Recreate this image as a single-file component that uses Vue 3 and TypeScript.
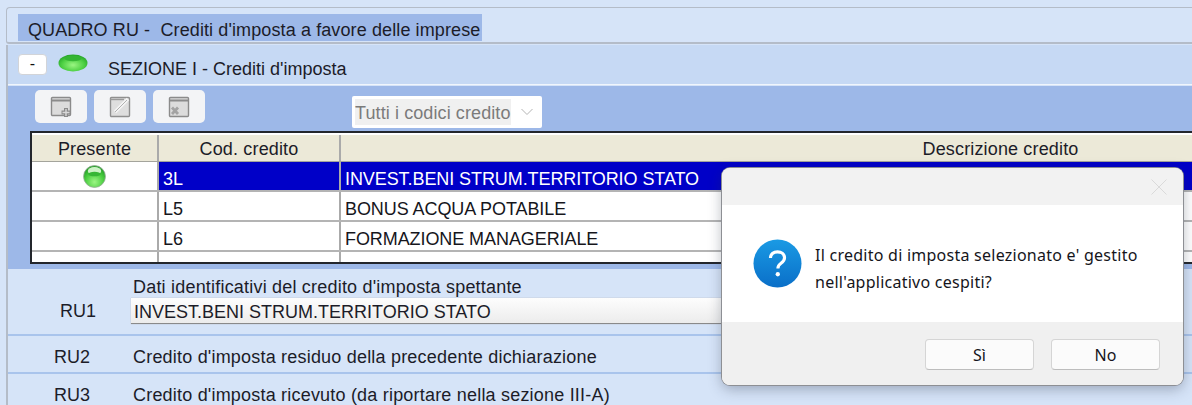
<script setup lang="ts">
interface CreditRow {
  code: string
  description: string
  present?: boolean
  selected?: boolean
}

const rows: CreditRow[] = [
  { code: '3L', description: 'INVEST.BENI STRUM.TERRITORIO STATO', present: true, selected: true },
  { code: 'L5', description: 'BONUS ACQUA POTABILE' },
  { code: 'L6', description: 'FORMAZIONE MANAGERIALE' },
  { code: '', description: '' }
]
</script>

<template>
  <div class="page">
    <div class="frame">
      <div class="quadro">
        <span class="quadro-title">QUADRO RU -&nbsp; Crediti d'imposta a favore delle imprese</span>
      </div>

      <div class="section">
        <div class="section-head">
          <button type="button" class="collapse">-</button>
          <svg class="oval" width="30" height="18" viewBox="0 0 30 18">
            <defs>
              <radialGradient id="ovalFill" cx="50%" cy="62%" r="60%">
                <stop offset="0" stop-color="#9af582" />
                <stop offset="0.65" stop-color="#4ccf42" />
                <stop offset="1" stop-color="#27a62a" />
              </radialGradient>
            </defs>
            <ellipse cx="15" cy="9" rx="14.5" ry="8.5" fill="url(#ovalFill)" />
            <ellipse cx="15" cy="4.6" rx="8.5" ry="2.6" fill="#35b534" />
          </svg>
          <span class="section-title">SEZIONE I - Crediti d'imposta</span>
        </div>

        <div class="panel">
          <div class="toolbar">
            <button type="button" class="tool">
              <svg width="22" height="22" viewBox="0 0 22 22" fill="none">
                <rect x="1.5" y="1.5" width="19" height="18" rx="1" fill="#dcdcdc" stroke="#8b8b8b" stroke-width="1.4" />
                <path d="M1.5 4.5H20.5" stroke="#8b8b8b" stroke-width="2" />
                <path d="M16 12V21M11.5 16.5H20.5" stroke="#8b8b8b" stroke-width="4" />
                <path d="M16 13V20M12.5 16.5H19.5" stroke="#d9d9d9" stroke-width="1.4" />
              </svg>
            </button>
            <button type="button" class="tool">
              <svg width="22" height="22" viewBox="0 0 22 22" fill="none">
                <rect x="1.5" y="1.5" width="19" height="19" rx="1" fill="#dedede" stroke="#8f8f8f" stroke-width="1.4" />
                <path d="M1.5 3.5H15" stroke="#9a9a9a" stroke-width="1.4" />
                <path d="M6 16L19 3" stroke="#f4f4f4" stroke-width="3.6" />
                <path d="M6 16L18 4" stroke="#b0b0b0" stroke-width="1" />
              </svg>
            </button>
            <button type="button" class="tool">
              <svg width="22" height="22" viewBox="0 0 22 22" fill="none">
                <rect x="1.5" y="1.5" width="19" height="19" rx="1" fill="#dcdcdc" stroke="#8b8b8b" stroke-width="1.4" />
                <path d="M1.5 4.5H20.5" stroke="#8b8b8b" stroke-width="2" />
                <path d="M4 11.5L10 18M10 11.5L4 18" stroke="#a3a3a3" stroke-width="2.8" />
              </svg>
            </button>
            <div class="select">
              <span class="select-value">Tutti i codici credito</span>
              <svg width="14" height="8" viewBox="0 0 14 8" fill="none">
                <path d="M1.5 1L7 6.5L12.5 1" stroke="#b4b4b4" stroke-width="1" />
              </svg>
            </div>
          </div>

          <div class="grid">
            <div class="grid-row grid-head">
              <div class="cell">Presente</div>
              <div class="cell">Cod. credito</div>
              <div class="cell cell-last">Descrizione credito</div>
            </div>
            <div
              v-for="(row, i) in rows"
              :key="i"
              :class="['grid-row', 'grid-body', { 'grid-selected': row.selected }]"
            >
              <div class="cell cell-present">
                <svg v-if="row.present" width="23" height="23" viewBox="0 0 24 24">
                  <defs>
                    <radialGradient id="dotFill" cx="50%" cy="75%" r="65%">
                      <stop offset="0" stop-color="#9cf684" />
                      <stop offset="0.65" stop-color="#4acd40" />
                      <stop offset="1" stop-color="#29a42b" />
                    </radialGradient>
                  </defs>
                  <circle cx="12" cy="12" r="11.4" fill="url(#dotFill)" stroke="#9aa89a" stroke-width="0.8" />
                  <ellipse cx="12" cy="6.2" rx="7" ry="4" fill="#cdf3c6" />
                  <ellipse cx="12" cy="9.4" rx="6.5" ry="2.4" fill="#36b635" />
                </svg>
              </div>
              <div class="cell cell-code">{{ row.code }}</div>
              <div class="cell cell-desc">{{ row.description }}</div>
            </div>
          </div>
        </div>

        <div class="fields">
          <div class="field field-first">
            <div class="field-code">RU1</div>
            <div class="field-body">
              <div class="field-label">Dati identificativi del credito d'imposta spettante</div>
              <div class="field-input">INVEST.BENI STRUM.TERRITORIO STATO</div>
            </div>
          </div>
          <div class="field field-line">
            <div class="field-code field-code-left">RU2</div>
            <div class="field-label">Credito d'imposta residuo della precedente dichiarazione</div>
          </div>
          <div class="field field-line">
            <div class="field-code field-code-left">RU3</div>
            <div class="field-label">Credito d'imposta ricevuto (da riportare nella sezione III-A)</div>
          </div>
        </div>
      </div>
    </div>

    <div class="dialog" role="dialog">
      <div class="dialog-bar">
        <svg width="16" height="16" viewBox="0 0 16 16" fill="none">
          <path d="M0.5 0.5L15.5 15.5M15.5 0.5L0.5 15.5" stroke="#dadada" stroke-width="1" />
        </svg>
      </div>
      <div class="dialog-body">
        <svg class="dialog-icon" width="49" height="49" viewBox="0 0 50 50">
          <defs>
            <linearGradient id="helpFill" x1="0" y1="0" x2="0" y2="1">
              <stop offset="0" stop-color="#1a9ae4" />
              <stop offset="1" stop-color="#0a6fc8" />
            </linearGradient>
          </defs>
          <circle cx="25" cy="25" r="24.5" fill="url(#helpFill)" />
          <path
            d="M17.8 19.5C17.8 15.5 20.8 13.2 25 13.2C29.2 13.2 32.2 15.6 32.2 19.2C32.2 22 30.6 23.4 28.6 24.8C26.4 26.3 25.4 27.4 25.4 30.2"
            fill="none"
            stroke="#fff"
            stroke-width="3.2"
          />
          <circle cx="25.3" cy="36" r="2.2" fill="#fff" />
        </svg>
        <p class="dialog-text">Il credito di imposta selezionato e' gestito<br />nell'applicativo cespiti?</p>
      </div>
      <div class="dialog-foot">
        <button type="button" class="dialog-btn">Sì</button>
        <button type="button" class="dialog-btn">No</button>
      </div>
    </div>
  </div>
</template>

<style>
html,
body {
  margin: 0;
  overflow: hidden;
}
</style>

<style scoped>
.page {
  position: relative;
  width: 1192px;
  height: 405px;
  overflow: hidden;
  padding-top: 7px;
  box-sizing: border-box;
  background: #d6e4f8;
  font-family: "Liberation Sans", Arial, sans-serif;
  font-size: 18px;
  color: #1c1c28;
}

.frame {
  margin-left: 6px;
}

.quadro {
  height: 37px;
  box-sizing: border-box;
  padding: 7px 0 0 11px;
  border: 1px solid #b4bcc8;
  border-right: 0;
  border-bottom-width: 2px;
  border-radius: 4px 0 0 3px;
  background: #d6e4f8;
}

.quadro-title {
  display: block;
  width: 464px;
  height: 27px;
  margin-top: -1px;
  padding-left: 10px;
  box-sizing: border-box;
  line-height: 33px;
  letter-spacing: 0.11px;
  white-space: nowrap;
  background: #9db8e8;
}

.section {
  margin-top: 1px;
  border-left: 2px solid #b4bcc8;
}

.section-head {
  display: flex;
  align-items: center;
  height: 39px;
  padding-left: 10px;
  background: #c6d9f4;
  border-bottom: 1px solid #f0f5fc;
}

.collapse {
  width: 29px;
  height: 21px;
  padding: 0 0 2px;
  border: 1px solid #d2d4d8;
  border-radius: 4px;
  background: #fff;
  font: 16px "Liberation Sans", Arial, sans-serif;
  color: #111;
}

.oval {
  margin: -4px 0 0 11px;
}

.section-title {
  margin: 10px 0 0 20px;
}

.panel {
  height: 183px;
  padding: 4px 0 0 22px;
  box-sizing: border-box;
  margin-top: 1px;
  background: #9db8e8;
}

.toolbar {
  display: flex;
  height: 41px;
  gap: 7px;
  padding-left: 5px;
}

.tool {
  display: flex;
  align-items: center;
  justify-content: center;
  width: 52px;
  height: 33px;
  padding: 0;
  border: 0;
  border-radius: 5px;
  background: #f3f4f6;
}

.select {
  display: flex;
  align-items: center;
  width: 190px;
  height: 32px;
  margin: 6px 0 0 140px;
  padding: 3px;
  box-sizing: border-box;
  background: #fff;
  border-radius: 2px;
}

.select-value {
  display: block;
  height: 26px;
  line-height: 29px;
  letter-spacing: 0.1px;
  background: #f0f0f0;
  color: #7b7b7b;
  white-space: nowrap;
  margin-right: 9px;
}

.grid {
  height: 133px;
  overflow: hidden;
  box-sizing: border-box;
  border: 2px solid #23262c;
  border-right: 0;
  background: #fff;
}

.grid-row {
  display: grid;
  grid-template-columns: 127px 182px 1fr;
  height: 30px;
  box-sizing: border-box;
  border-bottom: 2px solid #b4b4b4;
}

.grid-head {
  height: 27px;
  margin-top: 2px;
  border-bottom: 1px solid #a4a49c;
  background: #ece9d8;
  text-align: center;
  letter-spacing: 0.15px;
}

.cell {
  box-sizing: border-box;
  border-right: 2px solid #aaa;
  line-height: 28px;
  white-space: nowrap;
  overflow: hidden;
}

.cell-last,
.cell-desc {
  border-right: 0;
}

.cell-last {
  padding-left: 468px;
}

.cell-present {
  display: flex;
  justify-content: center;
  padding-top: 3px;
}

.cell-code,
.cell-desc {
  padding-left: 4px;
  line-height: 35px;
  letter-spacing: -0.08px;
  color: #16161c;
}

.grid-selected .cell-code,
.grid-selected .cell-desc {
  background: #0000c8;
  color: #fff;
}

.fields {
  margin-top: 1px;
  background: #d6e4f8;
}

.field {
  display: flex;
  box-sizing: border-box;
  border-bottom: 2px solid #a9c4ec;
}

.field-first {
  height: 66px;
}

.field-line {
  height: 38px;
  align-items: center;
  padding-top: 6px;
}

.field-code {
  width: 125px;
  padding-left: 52px;
  box-sizing: border-box;
  line-height: 1;
}

.field-first .field-code {
  padding-top: 32px;
}

.field-code-left {
  padding-left: 46px;
}

.field-body {
  padding-top: 8px;
}

.field-label {
  white-space: nowrap;
  line-height: 19px;
  letter-spacing: 0.2px;
}

.field-input {
  width: 800px;
  height: 26px;
  margin-top: 1px;
  margin-left: -2px;
  padding-left: 3px;
  box-sizing: border-box;
  line-height: 29px;
  background: linear-gradient(#fdfdfd, #ececec);
  border-bottom: 1px solid #8a8a8a;
  box-shadow: 0 0 1px #aaa;
  white-space: nowrap;
}

.dialog {
  position: absolute;
  left: 722px;
  top: 168px;
  display: flex;
  flex-direction: column;
  width: 461px;
  height: 217px;
  overflow: hidden;
  border-radius: 8px;
  background: #fff;
  box-shadow:
    0 0 0 1px #8d8f94,
    0 4px 14px rgba(40, 50, 70, 0.35);
  font-family: "Noto Sans", "Open Sans", sans-serif;
}

.dialog-bar {
  display: flex;
  justify-content: flex-end;
  align-items: center;
  height: 37px;
  padding-right: 16px;
  background: #f2f2f2;
}

.dialog-body {
  display: flex;
  align-items: center;
  flex: 1;
  padding-left: 31px;
}

.dialog-icon {
  flex: none;
}

.dialog-text {
  margin: 10px 0 0 13px;
  font-size: 16px;
  line-height: 27px;
  letter-spacing: 0.25px;
  color: #15151b;
}

.dialog-foot {
  display: flex;
  justify-content: flex-end;
  gap: 17px;
  height: 63px;
  padding: 17px 23px 0 0;
  box-sizing: border-box;
  background: #f0f0f0;
}

.dialog-btn {
  width: 109px;
  height: 31px;
  padding: 0;
  border: 1px solid #d5d5d5;
  border-bottom-color: #bdbdbd;
  border-radius: 4px;
  background: #fbfbfb;
  font: 16px "Noto Sans", "Open Sans", sans-serif;
  color: #15151b;
}
</style>
